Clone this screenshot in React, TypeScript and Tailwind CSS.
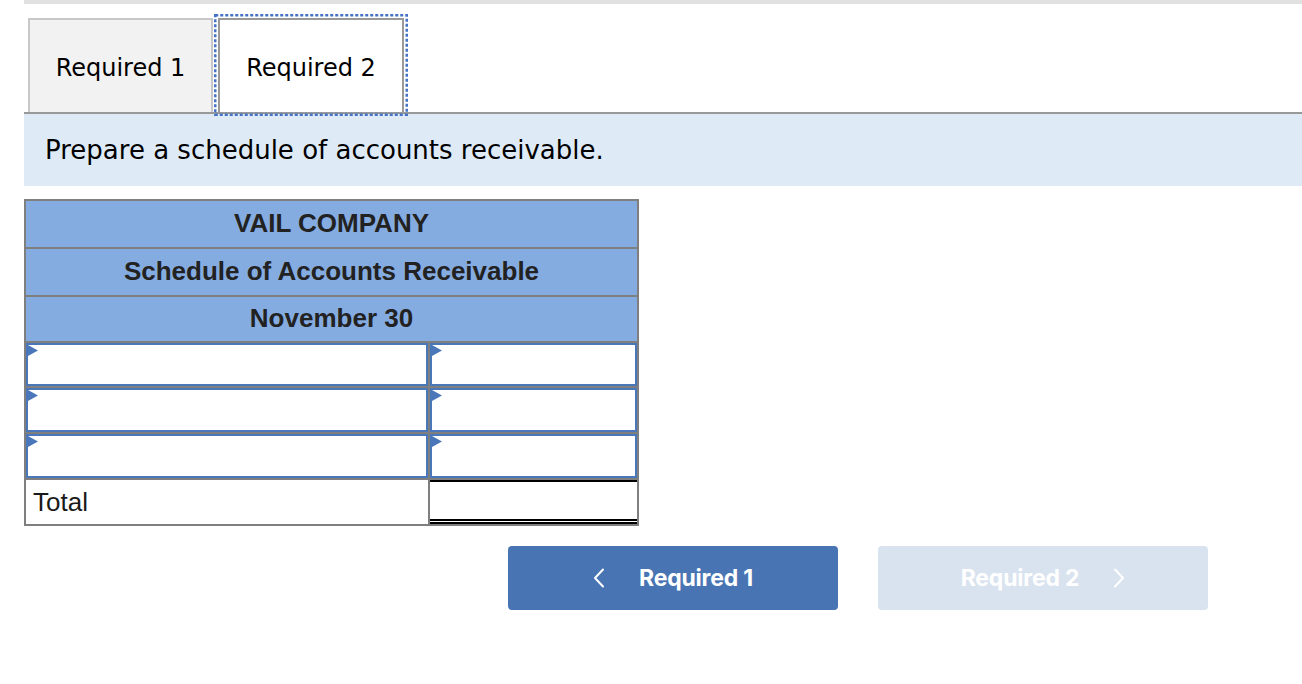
import React from "react";

const Marker = () => (
  <svg
    className="absolute left-0 top-0"
    width="10"
    height="12"
    viewBox="0 0 10 12"
  >
    <polygon points="0,0 10,5.5 0,11" fill="#4a77b9" />
  </svg>
);

const InputCell = ({ className }: { className: string }) => (
  <div className={`relative border-2 border-[#4a77b9] bg-white ${className}`}>
    <Marker />
  </div>
);

export default function App() {
  const verdana = { fontFamily: '"DejaVu Sans", Verdana, sans-serif' };
  const arial = { fontFamily: '"Liberation Sans", Arial, sans-serif' };
  const inter = { fontFamily: 'Inter, Roboto, "Liberation Sans", sans-serif' };

  return (
    <div className="w-[1302px] h-[684px] bg-white overflow-hidden">
      <div className="pl-[24px]">
        <div className="h-[4px] bg-[#e1e1e1]" />
        {/* Tabs */}
        <div className="flex items-end h-[110px] border-b-2 border-[#999999] pl-[4px]">
          <button
            className="w-[185px] h-[94px] pt-[3px] bg-[#f2f2f2] border-2 border-b-0 border-[#c8c8c8] text-[24px] text-black"
            style={verdana}
          >
            Required 1
          </button>
          <div className="ml-[1px] -mb-[4px] relative z-10 p-[4px]">
            <button
              className="block w-[186px] h-[94px] pt-[3px] bg-white border-2 border-b-0 border-[#999999] text-[24px] text-black"
              style={verdana}
            >
              Required 2
            </button>
            <svg className="absolute inset-0 w-full h-full pointer-events-none">
              <rect
                x="1.25"
                y="1.25"
                width="191.5"
                height="99.5"
                fill="none"
                stroke="#4472c4"
                strokeWidth="2.5"
                strokeDasharray="3 2"
              />
            </svg>
          </div>
        </div>
        {/* Instruction */}
        <div
          className="h-[72px] bg-[#deebf7] flex items-center pl-[21px] text-[26px] text-black"
          style={verdana}
        >
          Prepare a schedule of accounts receivable.
        </div>

        {/* Table */}
        <div
          className="mt-[13px] w-[615px] border-2 border-[#7f7f7f] text-[#222222]"
          style={arial}
        >
          <div className="h-[46px] pb-[2px] bg-[#85ace1] flex items-center justify-center text-[26px] font-bold">
            VAIL COMPANY
          </div>
          <div className="h-[48px] pb-[2px] border-t-2 border-[#7f7f7f] bg-[#85ace1] flex items-center justify-center text-[26px] font-bold">
            Schedule of Accounts Receivable
          </div>
          <div className="h-[46px] pb-[2px] border-t-2 border-[#7f7f7f] bg-[#85ace1] flex items-center justify-center text-[26px] font-bold">
            November 30
          </div>
          {[45, 46, 46].map((h, i) => (
            <div
              key={i}
              className={`${h === 45 ? "h-[45px]" : "h-[46px]"} border-t-2 border-[#7f7f7f] flex`}
            >
              <InputCell className="w-[402px] h-full" />
              <div className="w-[2px] bg-[#7f7f7f]" />
              <InputCell className="flex-1 h-full" />
            </div>
          ))}
          <div className="h-[46px] border-t-2 border-[#7f7f7f] flex">
            <div className="w-[402px] flex items-center pl-[7px] text-[26px] text-[#1a1a1a]">
              Total
            </div>
            <div className="w-[2px] bg-[#7f7f7f]" />
            <div className="flex-1 border-t-2 border-t-black border-b-[5px] border-b-black [border-bottom-style:double]" />
          </div>
        </div>

        {/* Buttons */}
        <div className="mt-[20px] ml-[484px] flex gap-[40px]" style={inter}>
          <button className="w-[330px] h-[64px] rounded-[4px] bg-[#4874b3] text-white flex items-center justify-center gap-[34px] text-[23px] font-bold tracking-[-0.2px]">
            <svg width="12" height="20" viewBox="0 0 12 20" fill="none">
              <path
                d="M10 1.5 L2 10 L10 18.5"
                stroke="white"
                strokeWidth="2"
                strokeLinecap="round"
                strokeLinejoin="round"
              />
            </svg>
            <span>Required 1</span>
          </button>
          <button className="w-[330px] h-[64px] rounded-[4px] bg-[#d9e3ef] text-white flex items-center justify-center gap-[34px] text-[23px] font-bold tracking-[-0.2px]">
            <span>Required 2</span>
            <svg width="12" height="20" viewBox="0 0 12 20" fill="none">
              <path
                d="M2 1.5 L10 10 L2 18.5"
                stroke="white"
                strokeWidth="2"
                strokeLinecap="round"
                strokeLinejoin="round"
              />
            </svg>
          </button>
        </div>
      </div>
    </div>
  );
}
